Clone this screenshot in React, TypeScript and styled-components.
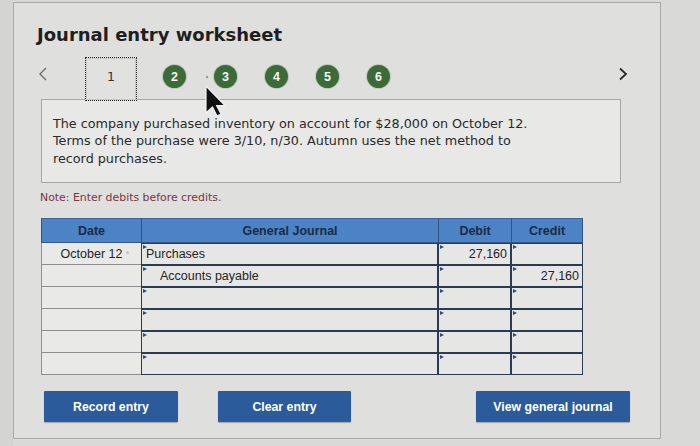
import React from "react";
import styled, { createGlobalStyle } from "styled-components";

const GlobalStyle = createGlobalStyle`
  html, body {
    margin: 0;
    padding: 0;
    background: #d8d8d6;
  }
  * { box-sizing: border-box; }
`;

const Page = styled.div`
  position: relative;
  display: flex;
  width: 700px;
  height: 446px;
  overflow: hidden;
  background: #d9d9d7;
`;

const Gutter = styled.div`
  width: 13px;
  flex: none;
  background: #d4d4d2;
`;

const Panel = styled.div`
  width: 648px;
  height: 437px;
  margin-top: 2px;
  flex: none;
  display: flex;
  flex-direction: column;
  background: #dfdfdd;
  border: 1px solid #a9a9a7;
`;

const Title = styled.h1`
  margin: 21px 0 0 23px;
  font-family: "DejaVu Sans", Verdana, sans-serif;
  font-size: 18px;
  line-height: 21px;
  font-weight: bold;
  color: #1e1e1e;
`;

const NavRow = styled.div`
  display: flex;
  align-items: flex-start;
  height: 42px;
  margin-top: 12px;
  padding: 0 32px 0 24px;
`;

const Chevron = styled.svg<{ $dark?: boolean }>`
  flex: none;
  width: 10px;
  height: 14px;
  margin-top: 10px;
  stroke: ${(p) => (p.$dark ? "#2a2a2a" : "#6f6f6f")};
  stroke-width: ${(p) => (p.$dark ? 1.8 : 1.4)};
  fill: none;
`;

const NextChevron = styled(Chevron)`
  margin-left: auto;
`;

const CurrentStep = styled.div`
  position: relative;
  z-index: 1;
  flex: none;
  width: 52px;
  height: 44px;
  margin-left: 37px;
  display: flex;
  align-items: center;
  justify-content: center;
  padding-bottom: 5px;
  border: 1px dotted #262626;
  box-shadow: inset 0 0 0 1px #c9c9c7;
  background: #e1e1df;
  font-family: "DejaVu Sans", Verdana, sans-serif;
  font-size: 12.5px;
  color: #333;
`;

const StepDots = styled.div`
  display: flex;
  gap: 28px;
  margin: 8px 0 0 26px;
`;

const StepDot = styled.div`
  width: 23px;
  height: 23px;
  border-radius: 50%;
  display: flex;
  align-items: center;
  justify-content: center;
  background: #3c6b39;
  box-shadow: 0 0 0 1px rgba(140, 170, 135, 0.45);
  font-family: "Liberation Sans", Arial, sans-serif;
  font-weight: bold;
  font-size: 12.5px;
  color: #f4f4f4;
`;

const Content = styled.div`
  display: flex;
  flex-direction: column;
  align-items: flex-start;
  padding-left: 27px;
`;

const Prompt = styled.div`
  width: 580px;
  height: 84px;
  padding: 15px 12px 0 11px;
  background: #e8e8e6;
  border: 1px solid #a6a6a4;
  font-family: "DejaVu Sans", Verdana, sans-serif;
  font-size: 12.75px;
  line-height: 17.4px;
  color: #2a2a2a;
`;

const PromptText = styled.p`
  margin: 0;
  max-width: 500px;
`;

const Note = styled.p`
  margin: 8px 0 0 -1px;
  font-family: "DejaVu Sans", Verdana, sans-serif;
  font-size: 10.9px;
  color: #7c3442;
`;

const Journal = styled.div`
  margin-top: 14px;
  display: grid;
  grid-template-columns: 100px 297px 73px 72px;
  grid-template-rows: 25px repeat(6, 22px);
  font-family: "Liberation Sans", Arial, sans-serif;
  font-size: 12.5px;
  color: #242424;
`;

const HeadCell = styled.div<{ $last?: boolean }>`
  display: flex;
  align-items: center;
  justify-content: center;
  background: #4c83c5;
  border-top: 1px solid #3d679b;
  border-bottom: 1px solid #35578a;
  border-left: 1px solid #33527c;
  ${(p) => (p.$last ? "border-right: 1px solid #33527c;" : "")}
  font-weight: bold;
  color: #1b2a44;
`;

const DateCell = styled.div`
  position: relative;
  display: flex;
  align-items: center;
  justify-content: center;
  background: #e9e9e8;
  border-left: 1px solid #8e8e8e;
  border-bottom: 1px solid #8e8e8e;
`;

const DateMark = styled.span`
  position: absolute;
  right: 12px;
  top: 8px;
  width: 3px;
  height: 3px;
  border-radius: 50%;
  background: #c4c4c4;
`;

const EntryCell = styled.div<{ $align?: "left" | "right"; $indent?: number }>`
  position: relative;
  display: flex;
  align-items: center;
  justify-content: ${(p) => (p.$align === "right" ? "flex-end" : "flex-start")};
  padding: 0 3px 0 ${(p) => 4 + (p.$indent ?? 0)}px;
  background: #e6e6e5;
  border: 1px solid #2b3a55;

  &::before {
    content: "";
    position: absolute;
    left: 1px;
    top: 1px;
    border-style: solid;
    border-width: 2.5px 0 2.5px 4px;
    border-color: transparent transparent transparent #2e4a78;
  }
`;

const Actions = styled.div`
  display: flex;
  align-items: flex-start;
  margin-top: 16px;
  padding: 0 30px;
`;

const ActionButton = styled.button<{ $width: number; $gap?: string }>`
  width: ${(p) => p.$width}px;
  height: 31px;
  margin-left: ${(p) => p.$gap ?? "0"};
  border: none;
  border-radius: 1px;
  background: #2b5b9b;
  box-shadow: 0 1px 1px rgba(0, 0, 0, 0.25);
  font-family: "Liberation Sans", Arial, sans-serif;
  font-weight: bold;
  font-size: 12.3px;
  color: #ffffff;
  cursor: pointer;
`;

const Pointer = styled.svg`
  position: absolute;
  left: 203px;
  top: 75px;
  width: 24px;
  height: 42px;
  pointer-events: none;
`;

type Line = {
  date?: string;
  account?: string;
  indent?: number;
  debit?: string;
  credit?: string;
};

const lines: Line[] = [
  { date: "October 12", account: "Purchases", debit: "27,160" },
  { account: "Accounts payable", indent: 14, credit: "27,160" },
  {},
  {},
  {},
  {},
];

export default function App() {
  return (
    <>
      <GlobalStyle />
      <Page>
        <Gutter />
        <Panel>
          <Title>Journal entry worksheet</Title>
          <NavRow>
            <Chevron viewBox="0 0 10 14">
              <polyline points="8,1 2,7 8,13" />
            </Chevron>
            <CurrentStep>1</CurrentStep>
            <StepDots>
              {[2, 3, 4, 5, 6].map((n) => (
                <StepDot key={n}>{n}</StepDot>
              ))}
            </StepDots>
            <NextChevron viewBox="0 0 10 14" $dark>
              <polyline points="2,1.5 8,7 2,12.5" />
            </NextChevron>
          </NavRow>
          <Content>
            <Prompt>
              <PromptText>
                The company purchased inventory on account for $28,000 on October 12.
                Terms of the purchase were 3/10, n/30. Autumn uses the net method to
                record purchases.
              </PromptText>
            </Prompt>
            <Note>Note: Enter debits before credits.</Note>
            <Journal>
              <HeadCell>Date</HeadCell>
              <HeadCell>General Journal</HeadCell>
              <HeadCell>Debit</HeadCell>
              <HeadCell $last>Credit</HeadCell>
              {lines.map((line, i) => (
                <React.Fragment key={i}>
                  <DateCell>
                    {line.date}
                    {line.date && <DateMark />}
                  </DateCell>
                  <EntryCell $indent={line.indent}>{line.account}</EntryCell>
                  <EntryCell $align="right">{line.debit}</EntryCell>
                  <EntryCell $align="right">{line.credit}</EntryCell>
                </React.Fragment>
              ))}
            </Journal>
          </Content>
          <Actions>
            <ActionButton $width={134}>Record entry</ActionButton>
            <ActionButton $width={133} $gap="40px">Clear entry</ActionButton>
            <ActionButton $width={154} $gap="auto">View general journal</ActionButton>
          </Actions>
        </Panel>
        <Pointer viewBox="0 0 24 42">
          <circle cx="4" cy="2" r="1.2" fill="#9a9a9a" />
          <path
            d="M3 11 L3 38 L9.5 32 L14 41 L18 39 L13.5 30.5 L22 30.5 Z"
            fill="#111"
            stroke="#f2f2f2"
            strokeWidth="1.2"
            strokeLinejoin="round"
          />
        </Pointer>
      </Page>
    </>
  );
}
